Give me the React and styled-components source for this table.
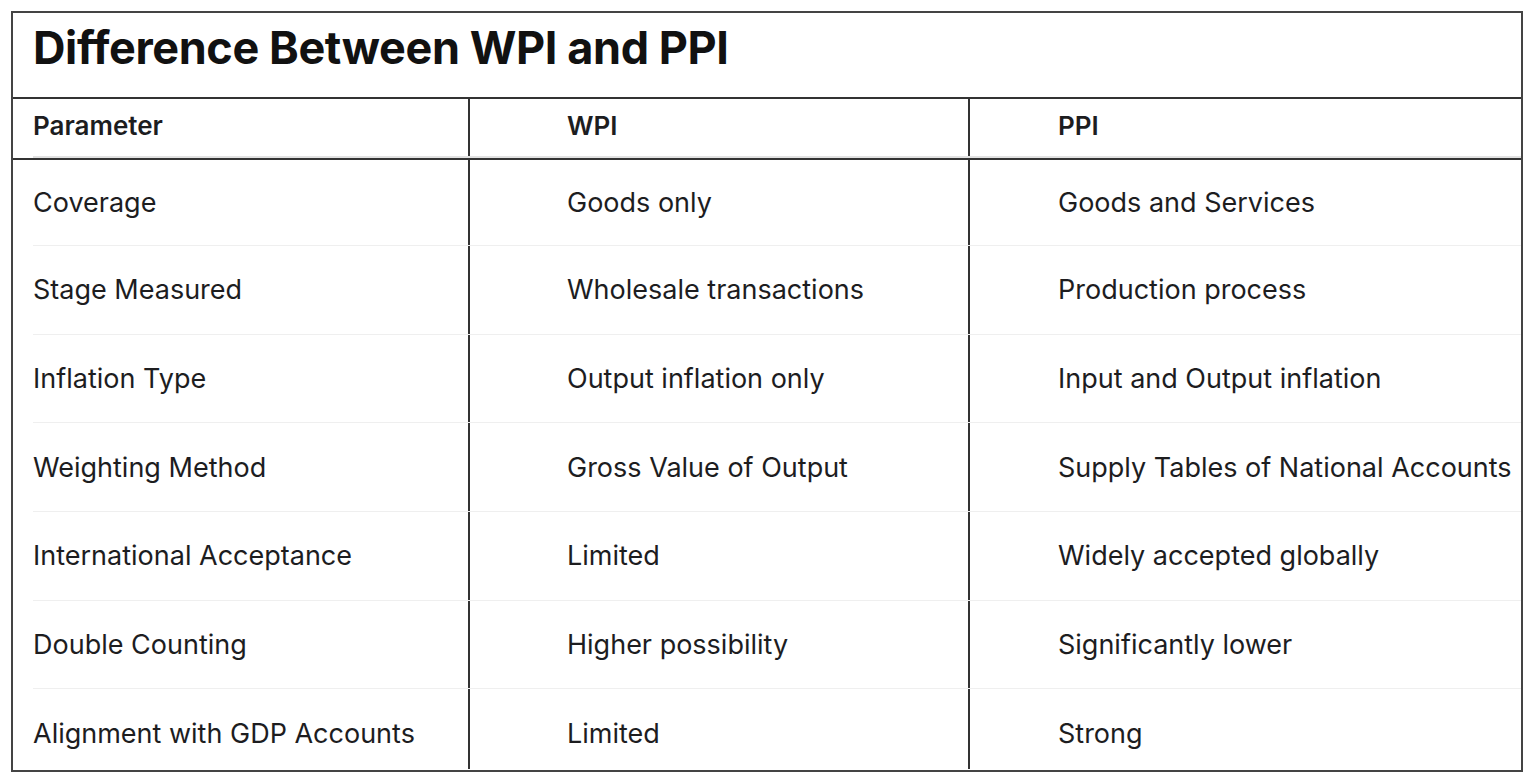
import styled, { createGlobalStyle } from 'styled-components';

const rows = [
  ['Coverage', 'Goods only', 'Goods and Services'],
  ['Stage Measured', 'Wholesale transactions', 'Production process'],
  ['Inflation Type', 'Output inflation only', 'Input and Output inflation'],
  ['Weighting Method', 'Gross Value of Output', 'Supply Tables of National Accounts'],
  ['International Acceptance', 'Limited', 'Widely accepted globally'],
  ['Double Counting', 'Higher possibility', 'Significantly lower'],
  ['Alignment with GDP Accounts', 'Limited', 'Strong'],
];

export default function App() {
  return (
    <>
      <GlobalStyle />
      <Frame>
        <TitleBar>
          <h1>Difference Between WPI and PPI</h1>
        </TitleBar>
        <HeadWrap>
          <Row $head>
            <Cell>Parameter</Cell>
            <Cell $col={2}>WPI</Cell>
            <Cell $col={3}>PPI</Cell>
          </Row>
        </HeadWrap>
        {rows.map((r, i) => (
          <Row key={r[0]} $first={i === 0} $last={i === rows.length - 1}>
            <Cell>{r[0]}</Cell>
            <Cell $col={2}>{r[1]}</Cell>
            <Cell $col={3}>{r[2]}</Cell>
          </Row>
        ))}
      </Frame>
    </>
  );
}

const GlobalStyle = createGlobalStyle`
  body {
    margin: 0;
    padding: 11px;
    background: #fff;
    font-family: Inter, "Noto Sans", sans-serif;
    color: #1d1d1f;
  }
`;

const Frame = styled.div`
  box-sizing: border-box;
  width: 1512px;
  height: 761px;
  border: 2px solid #444;
  overflow: hidden;
`;

const TitleBar = styled.div`
  box-sizing: border-box;
  height: 86px;
  display: flex;
  align-items: center;
  padding: 0 0 16px 20px;
  border-bottom: 2px solid #333;

  h1 {
    margin: 0;
    font-size: 45px;
    font-weight: 700;
    letter-spacing: -0.4px;
    color: #111;
  }
`;

const HeadWrap = styled.div`
  border-bottom: 2px solid #333;
`;

const rowHeight = (p) => {
  if (p.$head) return '59px';
  if (p.$first) return '86px';
  if (p.$last) return '80px';
  return '88.7px';
};

// vertical nudge of the text inside a row: [top, bottom]
const nudge = (p) => {
  if (p.$head) return ['0', '4px'];
  if (p.$first) return ['0', '0'];
  if (p.$last) return ['8px', '0'];
  return ['0', '0'];
};

const Row = styled.div`
  box-sizing: border-box;
  display: grid;
  grid-template-columns: 435px 500px 1fr;
  margin-left: 20px;
  height: ${rowHeight};
  border-bottom: ${(p) => (p.$head ? '2px solid #e2e2e2' : p.$last ? 'none' : '1px solid #efefef')};
  font-size: ${(p) => (p.$head ? '26px' : '27px')};
  font-weight: ${(p) => (p.$head ? 600 : 400)};

  > div {
    padding-top: ${(p) => nudge(p)[0]};
    padding-bottom: ${(p) => nudge(p)[1]};
  }
`;

const Cell = styled.div`
  box-sizing: border-box;
  display: flex;
  align-items: center;
  padding-left: ${(p) => (p.$col === 2 ? '97px' : p.$col === 3 ? '88px' : '0')};
  border-left: ${(p) => (p.$col ? '2px solid #333' : 'none')};
  white-space: nowrap;
`;
